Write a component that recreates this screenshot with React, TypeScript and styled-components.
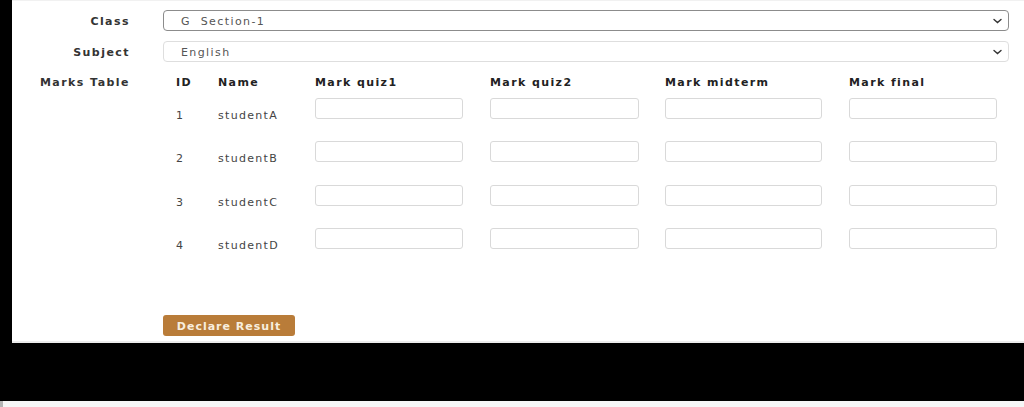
import React from "react";
import styled, { createGlobalStyle } from "styled-components";

const Global = createGlobalStyle`
  html, body { margin: 0; padding: 0; background: #000; }
  body { font-family: "DejaVu Sans", "Liberation Sans", sans-serif; }
  * { box-sizing: border-box; }
`;

const Screen = styled.div`
  width: 1024px;
  height: 407px;
  display: flex;
  flex-direction: column;
  background: #000;
`;

const Panel = styled.div`
  margin-left: 12px;
  height: 343px;
  background: #fff;
  border-top: 1px solid #f1f1f1;
  border-bottom: 2px solid #ececec;
  padding: 9px 15px 0 0;
  display: flex;
  flex-direction: column;
`;

const BlackGap = styled.div`
  height: 58px;
`;

const FooterStrip = styled.div`
  height: 6px;
  background: #f6f6f6;
  border-left: 3px solid #b5b5b5;
`;

const FieldRow = styled.div<{ $mt?: number }>`
  display: grid;
  grid-template-columns: 118px 1fr;
  column-gap: 33px;
  align-items: center;
  margin-top: ${(p) => p.$mt ?? 0}px;
`;

const Label = styled.div`
  text-align: right;
  font-size: 11px;
  font-weight: bold;
  letter-spacing: 1.45px;
  color: #333;
  line-height: 14px;
  padding-top: 2px;
`;

const SelectBox = styled.div<{ $dark?: boolean }>`
  height: 21px;
  border: 1px solid ${(p) => (p.$dark ? "#8c8c8c" : "#dedede")};
  border-radius: 4px;
  display: flex;
  align-items: center;
  justify-content: space-between;
  padding: 1px 6px 0 17px;
  font-size: 11px;
  letter-spacing: 1.4px;
  color: #555;
  white-space: pre;
`;

const Chevron = () => (
  <svg width="9" height="6" viewBox="0 0 9 6">
    <path d="M1 1.5 L4.5 4.5 L8 1.5" fill="none" stroke="#333" strokeWidth="1.4" strokeLinecap="round" />
  </svg>
);

const TableRow = styled.div<{ $h: number }>`
  display: grid;
  grid-template-columns: 55px 97px 175px 175px 184px 1fr;
  height: ${(p) => p.$h}px;
  align-items: start;
`;

const HeadCell = styled.div<{ $pl?: number }>`
  font-size: 11px;
  font-weight: bold;
  letter-spacing: 1.4px;
  color: #222;
  line-height: 14px;
  padding-top: 4px;
  padding-left: ${(p) => p.$pl ?? 0}px;
`;

const TextCell = styled.div<{ $pl?: number }>`
  font-size: 11px;
  letter-spacing: 1.3px;
  color: #444;
  line-height: 14px;
  padding-top: 11px;
  padding-left: ${(p) => p.$pl ?? 0}px;
`;

const MarkInput = styled.input<{ $w: number }>`
  width: ${(p) => p.$w}px;
  height: 21px;
  border: 1px solid #d9d9d9;
  border-radius: 3px;
  background: #fff;
  outline: none;
  padding: 0 6px;
`;

const MarksSection = styled.div`
  display: grid;
  grid-template-columns: 118px 1fr;
  column-gap: 33px;
  margin-top: 10px;
`;

const MarksLabel = styled(Label)`
  padding-top: 4px;
`;

const Table = styled.div`
  display: flex;
  flex-direction: column;
`;

const ButtonRow = styled.div`
  padding-left: 151px;
  margin-top: 43px;
`;

const DeclareButton = styled.button`
  width: 132px;
  height: 21px;
  background: #b97c39;
  border: none;
  border-radius: 3px;
  color: #f8eedf;
  font-family: "DejaVu Sans", "Liberation Sans", sans-serif;
  font-size: 11px;
  font-weight: bold;
  letter-spacing: 1px;
  padding: 1px 0 0;
  display: flex;
  align-items: center;
  justify-content: center;
`;

const students = [
  { id: 1, name: "studentA" },
  { id: 2, name: "studentB" },
  { id: 3, name: "studentC" },
  { id: 4, name: "studentD" },
];

const inputWidths = [148, 149, 157, 148];

export default function App() {
  return (
    <>
      <Global />
      <Screen>
        <Panel>
          <FieldRow>
            <Label>Class</Label>
            <SelectBox $dark>
              <span>G  Section-1</span>
              <Chevron />
            </SelectBox>
          </FieldRow>
          <FieldRow $mt={10}>
            <Label>Subject</Label>
            <SelectBox>
              <span>English</span>
              <Chevron />
            </SelectBox>
          </FieldRow>
          <MarksSection>
            <MarksLabel>Marks Table</MarksLabel>
            <Table>
              <TableRow $h={26}>
                <HeadCell $pl={13}>ID</HeadCell>
                <HeadCell>Name</HeadCell>
                <HeadCell>Mark quiz1</HeadCell>
                <HeadCell>Mark quiz2</HeadCell>
                <HeadCell>Mark midterm</HeadCell>
                <HeadCell>Mark final</HeadCell>
              </TableRow>
              {students.map((s, i) => (
                <TableRow key={s.id} $h={i % 2 === 0 ? 43 : 44}>
                  <TextCell $pl={13}>{s.id}</TextCell>
                  <TextCell>{s.name}</TextCell>
                  {inputWidths.map((w, j) => (
                    <MarkInput key={j} $w={w} />
                  ))}
                </TableRow>
              ))}
            </Table>
          </MarksSection>
          <ButtonRow>
            <DeclareButton>Declare Result</DeclareButton>
          </ButtonRow>
        </Panel>
        <BlackGap />
        <FooterStrip />
      </Screen>
    </>
  );
}
